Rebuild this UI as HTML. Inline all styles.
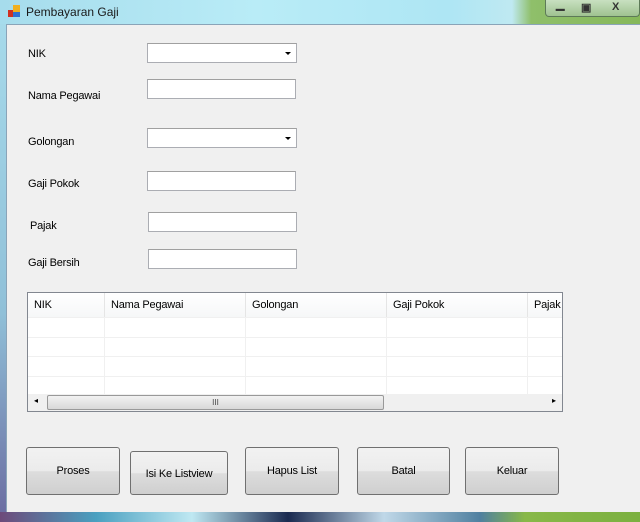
<!DOCTYPE html>
<html><head><style>
*{margin:0;padding:0;box-sizing:border-box}
body{width:640px;height:522px;overflow:hidden;position:relative;font-family:"Liberation Sans",sans-serif;font-size:11px;color:#000;background:linear-gradient(#a8dcec,#90c0d8 60%,#6a6aa0)}
.title{position:absolute;left:0;top:0;width:640px;height:24px;background:linear-gradient(90deg,#a6dcec 0%,#b9ecf7 40%,#aee6f4 70%,#bfe9f2 80%,#8fbf6a 83%,#86b85a 100%)}
.title span{position:absolute;left:26px;top:5px;font-size:12px;color:#1a1a1a}
.icon{position:absolute;left:8px;top:5px;width:12px;height:12px}
.ctl{position:absolute;left:545px;top:0;width:95px;height:17px;border:1px solid #5d7a58;border-top:none;border-radius:0 0 4px 4px;background:linear-gradient(#c8e0c0,#9fc290)}
.ctl b{position:absolute;top:1px;font-size:11px;color:#333}
.client{position:absolute;left:6px;top:24px;width:634px;height:489px;background:#f0f0f0;border:1px solid #8aa4b8;border-right:none}
.bottom{position:absolute;left:0;top:512px;width:640px;height:10px;background:linear-gradient(90deg,#6d4a7a 0%,#4aa0c0 15%,#bfe8f2 30%,#1a2a50 45%,#c0d8e8 60%,#5080a0 75%,#88b848 82%,#7bb040 100%)}
.lbl{position:absolute;left:28px;letter-spacing:-0.2px}
.inp{position:absolute;height:20px;background:#fff;border:1px solid #abadb3;border-top-color:#a0a0a0}
.dd:after{content:"";position:absolute;right:5px;top:8px;border-left:3px solid transparent;border-right:3px solid transparent;border-top:3px solid #000}
.lv{position:absolute;left:27px;top:292px;width:536px;height:120px;background:#fff;border:1px solid #828790}
.hd{position:absolute;top:0;height:24px;border-right:1px solid #e5e5e5;padding:6px 0 0 6px;background:linear-gradient(#fff,#f6f7f8);letter-spacing:-0.2px}
.vl{position:absolute;top:24px;height:78px;border-right:1px solid #f0f0f0}
.hl{position:absolute;left:0;width:534px;border-top:1px solid #f0f0f0}
.sb{position:absolute;left:0;top:101px;width:534px;height:17px;background:#f0f0f0}
.thumb{position:absolute;left:19px;top:1px;width:337px;height:15px;border:1px solid #999;border-radius:2px;background:linear-gradient(#f2f2f2,#d8d8d8);text-align:center;font-size:8px;line-height:13px;color:#444}
.btn{position:absolute;border:1px solid #707070;border-radius:3px;background:linear-gradient(#f2f2f2 0%,#ebebeb 50%,#dddddd 51%,#cfcfcf 100%);text-align:center;letter-spacing:-0.2px}
</style></head><body>
<div class="title">
<svg class="icon" viewBox="0 0 12 12"><rect x="0" y="5" width="5" height="7" fill="#d03020"/><rect x="5" y="0" width="7" height="7" fill="#f0b020"/><rect x="5" y="7" width="7" height="5" fill="#3070d0"/></svg>
<span>Pembayaran Gaji</span></div>
<div class="ctl"><b style="left:10px;top:-2px">▁</b><b style="left:35px">▣</b><b style="left:66px;font-weight:bold">X</b></div>
<div class="client"></div>
<div class="bottom"></div>

<div class="lbl" style="top:48px">NIK</div>
<div class="lbl" style="top:90px">Nama Pegawai</div>
<div class="lbl" style="top:136px">Golongan</div>
<div class="lbl" style="top:178px">Gaji Pokok</div>
<div class="lbl" style="top:220px;left:30px">Pajak</div>
<div class="lbl" style="top:257px">Gaji Bersih</div>

<div class="inp dd" style="left:147px;top:43px;width:150px"></div>
<div class="inp" style="left:147px;top:79px;width:149px"></div>
<div class="inp dd" style="left:147px;top:128px;width:150px"></div>
<div class="inp" style="left:147px;top:171px;width:149px"></div>
<div class="inp" style="left:148px;top:212px;width:149px"></div>
<div class="inp" style="left:148px;top:249px;width:149px"></div>

<div class="lv">
<div class="hd" style="left:0;width:77px">NIK</div>
<div class="hd" style="left:77px;width:141px">Nama Pegawai</div>
<div class="hd" style="left:218px;width:141px">Golongan</div>
<div class="hd" style="left:359px;width:141px">Gaji Pokok</div>
<div class="hd" style="left:500px;width:34px;border:none">Pajak</div>
<div class="vl" style="left:0;width:77px"></div>
<div class="vl" style="left:77px;width:141px"></div>
<div class="vl" style="left:218px;width:141px"></div>
<div class="vl" style="left:359px;width:141px"></div>
<div class="hl" style="top:24px"></div>
<div class="hl" style="top:44px"></div>
<div class="hl" style="top:63px"></div>
<div class="hl" style="top:83px"></div>
<div class="sb"><span style="position:absolute;left:6px;top:2px;font-size:8px">◂</span><div class="thumb">III</div><span style="position:absolute;right:6px;top:2px;font-size:8px">▸</span></div>
</div>

<div class="btn" style="left:26px;top:447px;width:94px;height:48px;padding-top:17px">Proses</div>
<div class="btn" style="left:130px;top:451px;width:98px;height:44px;padding-top:16px">Isi Ke Listview</div>
<div class="btn" style="left:245px;top:447px;width:94px;height:48px;padding-top:17px">Hapus List</div>
<div class="btn" style="left:357px;top:447px;width:93px;height:48px;padding-top:17px">Batal</div>
<div class="btn" style="left:465px;top:447px;width:94px;height:48px;padding-top:17px">Keluar</div>
</body></html>
